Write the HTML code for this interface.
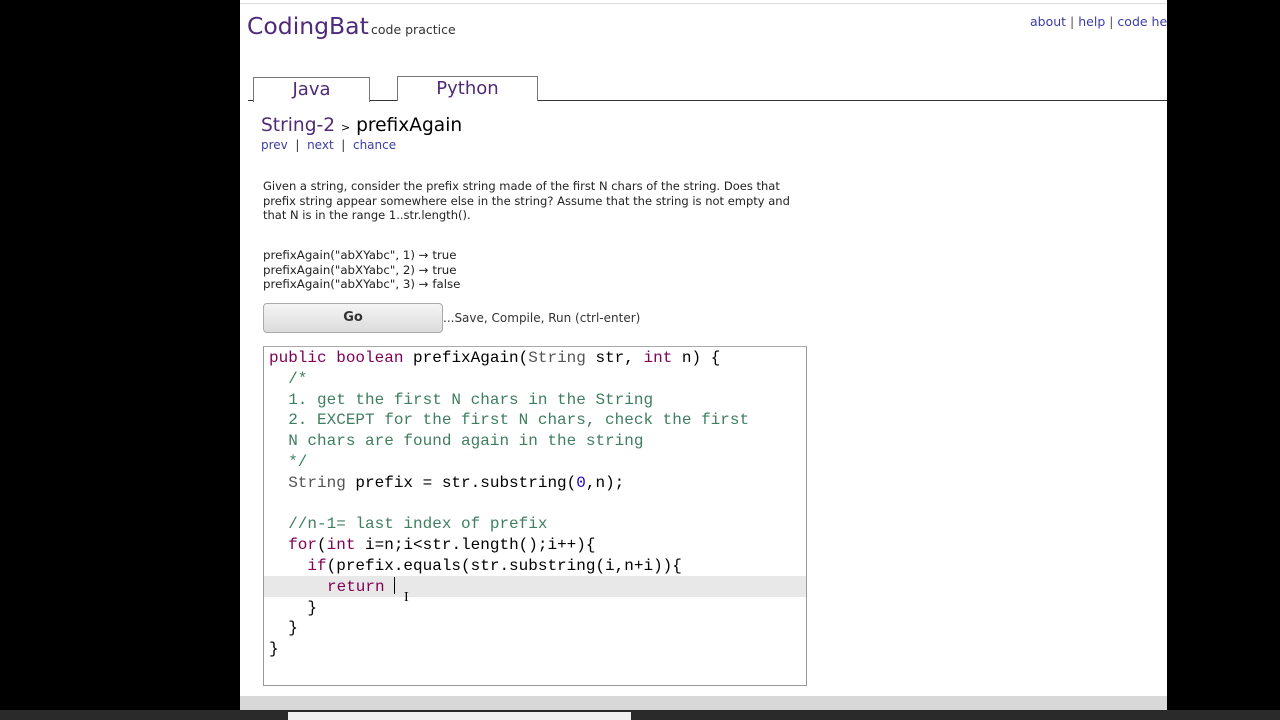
<!DOCTYPE html>
<html><head><meta charset="utf-8"><style>
*{margin:0;padding:0;box-sizing:border-box}
body{width:1280px;height:720px;background:#000;position:relative;overflow:hidden;font-family:"DejaVu Sans","Liberation Sans",sans-serif}
#pg{position:absolute;left:240px;top:0;width:927px;height:696px;background:#fff;overflow:hidden}
.a{position:absolute;white-space:nowrap}
.lk{color:#3c3ca8}
.pu{color:#4f2a7a}
#code{position:absolute;left:263px;top:346px;width:544px;height:340px;border:1px solid #999;border-top-color:#aaa;background:#fff;font-family:"Liberation Mono",monospace;font-size:16px;line-height:20.8px;padding:1px 0 0 5px;white-space:pre;color:#000;font-style:normal}
.k{color:#7f0055}.c{color:#3f7f5f;font-style:normal}.t{color:#555}.n{color:#1c00cf}
#hl{position:absolute;left:264px;top:576px;width:542px;height:21px;background:#e8e8e8}
</style></head><body>
<div id="pg">
<div class="a" style="left:0;top:3px;width:927px;height:1px;background:#ddd"></div>
<div class="a pu" style="left:7px;top:12px;font-size:23.5px">CodingBat</div>
<div class="a" style="left:131px;top:22px;font-size:12.5px;color:#333">code practice</div>
<div class="a lk" style="left:790px;top:14px;font-size:12.5px">about <span style="color:#555">|</span> help <span style="color:#555">|</span> code help</div>
<div class="a" style="left:8px;top:100px;width:919px;height:1px;background:#333"></div>
<div class="a pu" style="left:13px;top:77px;width:117px;height:25px;border:1px solid #777;border-bottom:none;background:#fff;text-align:center;font-size:18px;line-height:24px">Java</div>
<div class="a pu" style="left:157px;top:76px;width:141px;height:25px;border:1px solid #777;border-bottom:none;background:#fff;text-align:center;font-size:18px;line-height:24px">Python</div>
<div class="a" style="left:21px;top:115px;font-size:18.6px"><span class="pu">String-2</span> <span style="font-size:11px">&gt;</span> prefixAgain</div>
<div class="a lk" style="left:21px;top:138px;font-size:12px">prev <span style="color:#333">&nbsp;|&nbsp;</span> next <span style="color:#333">&nbsp;|&nbsp;</span> chance</div>
<div class="a" style="left:23px;top:179px;font-size:11.5px;line-height:14.5px;color:#222;white-space:normal;width:545px">Given a string, consider the prefix string made of the first N chars of the string. Does that prefix string appear somewhere else in the string? Assume that the string is not empty and that N is in the range 1..str.length().</div>
<div class="a" style="left:23px;top:248px;font-size:11.8px;line-height:14.5px;color:#222">prefixAgain("abXYabc", 1) → true<br>prefixAgain("abXYabc", 2) → true<br>prefixAgain("abXYabc", 3) → false</div>
<div class="a" style="left:23px;top:303px;width:180px;height:30px;border:1px solid #aaa;border-radius:4px;background:linear-gradient(#f4f4f4,#dcdcdc);text-align:center;font-weight:bold;font-size:13px;line-height:28px;color:#333">Go</div>
<div class="a" style="left:203px;top:311px;font-size:12px;color:#333">...Save, Compile, Run (ctrl-enter)</div>
</div>
<div id="code"><span class="k">public</span> <span class="k">boolean</span> prefixAgain(<span class="t">String</span> str, <span class="k">int</span> n) {
  <span class="c">/*</span>
<span class="c">  1. get the first N chars in the String</span>
<span class="c">  2. EXCEPT for the first N chars, check the first</span>
<span class="c">  N chars are found again in the string</span>
<span class="c">  */</span>
  <span class="t">String</span> prefix = str.substring(<span class="n">0</span>,n);

  <span class="c">//n-1= last index of prefix</span>
  <span class="k">for</span>(<span class="k">int</span> i=n;i&lt;str.length();i++){
    <span class="k">if</span>(prefix.equals(str.substring(i,n+i)){
      
    }
  }
}</div>
<div id="hl"></div>
<div class="a" style="left:327px;top:577px;font-family:'Liberation Mono',monospace;font-size:16px;line-height:20px;color:#7f0055">return <span style="display:inline-block;width:1px;height:17px;background:#000;vertical-align:-3px"></span></div>
<div class="a" style="left:404px;top:590px;font-size:14px;color:#000;font-family:'Liberation Serif',serif">I</div>
<div class="a" style="left:240px;top:696px;width:927px;height:14px;background:#d8d8d8"></div>
<div class="a" style="left:0;top:710px;width:1280px;height:10px;background:#2a2a2a"></div>
<div class="a" style="left:288px;top:712px;width:343px;height:8px;background:#f0f0f0"></div>
</body></html>
